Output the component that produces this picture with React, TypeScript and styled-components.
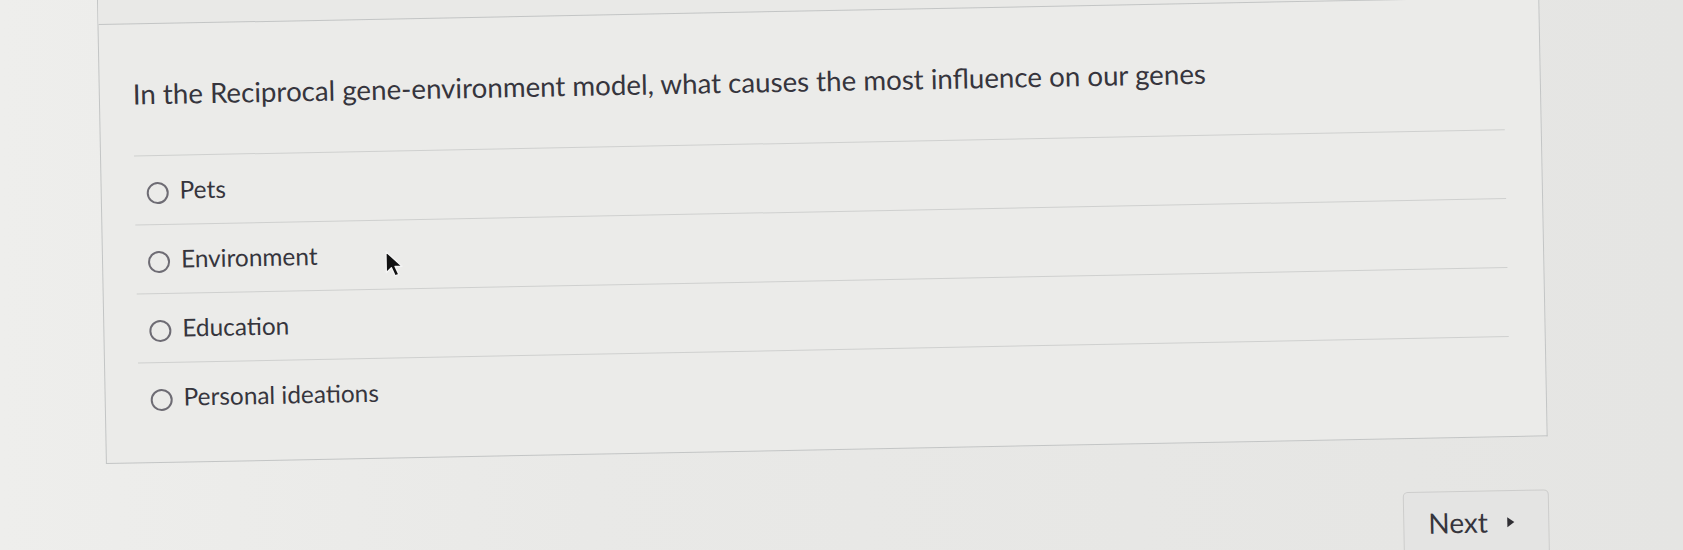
import React from "react";
import styled, { createGlobalStyle } from "styled-components";

const GlobalStyle = createGlobalStyle`
  html, body {
    margin: 0;
    padding: 0;
  }
  body {
    width: 1683px;
    height: 550px;
    overflow: hidden;
    background: linear-gradient(90deg, #eeeeec 0%, #e9e9e7 35%, #e5e5e3 100%);
    font-family: Lato, "Open Sans", "Liberation Sans", sans-serif;
    color: #36353d;
  }
`;

// the photo of the screen is tilted a little, so the whole stage is too
const Stage = styled.div`
  position: relative;
  display: flow-root;
  width: 1683px;
  padding-left: 97px;
  box-sizing: border-box;
  transform: rotate(-1.1deg);
  transform-origin: 0 0;
`;

const QuestionCard = styled.div`
  width: 1442px;
  margin-top: -30px;
  box-sizing: border-box;
  border: 1px solid #c3c5c5;
  border-top: none;
  background: #ebebe9;
`;

const CardHeader = styled.div`
  height: 56px;
  border-bottom: 1px solid #c3c5c5;
  background: #e9e9e7;
`;

const CardBody = styled.div`
  padding: 0 36px 30px 33px;
`;

const QuestionText = styled.div`
  height: 132px;
  display: flex;
  align-items: center;
  padding-top: 8px;
  box-sizing: border-box;
  font-size: 27.7px;
  border-bottom: 1px solid #cfd0cf;
`;

const AnswerList = styled.div`
  display: flex;
  flex-direction: column;
`;

const AnswerRow = styled.label<{ $last?: boolean }>`
  height: 68px;
  display: flex;
  align-items: center;
  gap: 11px;
  padding-left: 12px;
  font-size: 24.4px;
  border-bottom: ${(p) => (p.$last ? "1px solid transparent" : "1px solid #cfd0cf")};
`;

const Radio = styled.span`
  width: 22px;
  height: 22px;
  box-sizing: border-box;
  border: 2px solid #6e6c74;
  border-radius: 50%;
  flex-shrink: 0;
  margin-top: 6px;
`;

const AnswerText = styled.span`
  line-height: 1;
`;

const Footer = styled.div`
  width: 1442px;
  display: flex;
  justify-content: flex-end;
  margin-top: 53px;
`;

const NextButton = styled.button`
  width: 146px;
  height: 66px;
  display: flex;
  align-items: flex-start;
  justify-content: flex-start;
  gap: 19px;
  padding: 13px 0 0 24px;
  box-sizing: border-box;
  border: 1px solid #cdcdcc;
  border-radius: 5px;
  background: #e4e4e3;
  font-family: Lato, "Open Sans", sans-serif;
  font-size: 28px;
  color: #36353d;
`;

const Caret = styled.span`
  width: 0;
  height: 0;
  margin-top: 13px;
  border-top: 5px solid transparent;
  border-bottom: 5px solid transparent;
  border-left: 7px solid #2f2e33;
`;

const Pointer = styled.svg`
  position: absolute;
  left: 380px;
  top: 258px;
  width: 19px;
  height: 28px;
`;

const answers = ["Pets", "Environment", "Education", "Personal ideations"];

export default function App() {
  return (
    <>
      <GlobalStyle />
      <Stage>
        <QuestionCard>
          <CardHeader />
          <CardBody>
            <QuestionText>
              In the Reciprocal gene-environment model, what causes the most influence on our genes
            </QuestionText>
            <AnswerList>
              {answers.map((a, i) => (
                <AnswerRow key={a} $last={i === answers.length - 1}>
                  <Radio />
                  <AnswerText>{a}</AnswerText>
                </AnswerRow>
              ))}
            </AnswerList>
          </CardBody>
        </QuestionCard>
        <Footer>
          <NextButton>
            Next
            <Caret />
          </NextButton>
        </Footer>
        <Pointer viewBox="0 0 19 28">
          <path
            d="M1 1 L1 22 L6.2 17.2 L9.8 25.5 L13.5 24 L9.9 16 L16.8 16 Z"
            fill="#111"
            stroke="#f4f4f4"
            strokeWidth="1.4"
            strokeLinejoin="round"
          />
        </Pointer>
      </Stage>
    </>
  );
}
